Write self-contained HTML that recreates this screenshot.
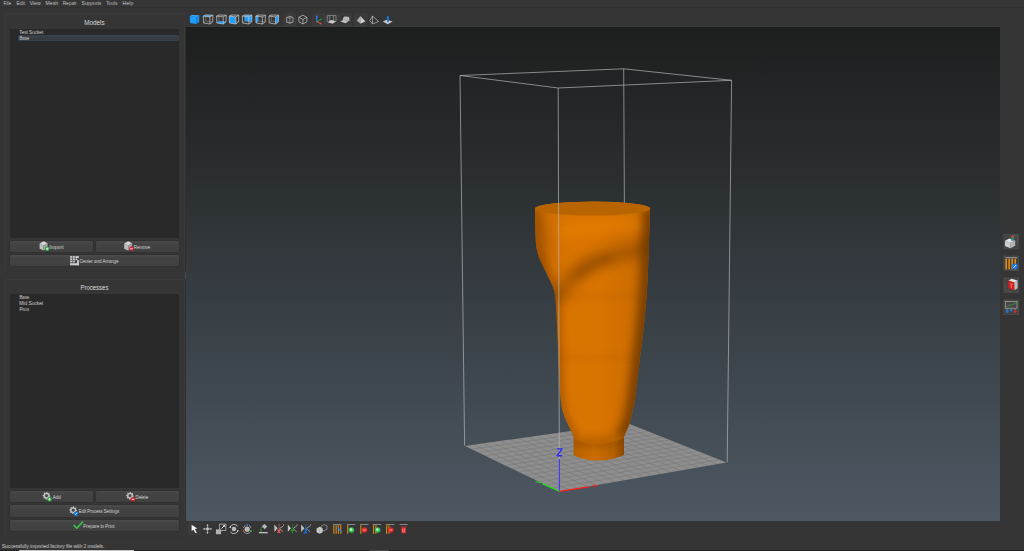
<!DOCTYPE html>
<html><head><meta charset="utf-8">
<style>
*{margin:0;padding:0;box-sizing:border-box}
html,body{width:1024px;height:551px;overflow:hidden;background:#353535;font-family:"Liberation Sans",sans-serif;position:relative}
.a{position:absolute}
.panel{position:absolute;left:5px;width:180px;border-top:1px solid #3a3a3a;border-left:1px solid #393939;border-right:1px solid #393939;border-bottom:1px solid #333}
.list{position:absolute;left:10px;width:169px;background:#292929}
.btn{position:absolute;border-radius:1.5px;background:linear-gradient(#4a4a4a,#434343 30%,#404040);box-shadow:0 0 0 0.5px #2e2e2e}
.vp{position:absolute;left:186px;top:27px;width:814px;height:494px;background:linear-gradient(#1d1e1e 0%,#2a2e30 30%,#3a4248 62%,#4d5863 100%)}
svg{position:absolute;left:0;top:0}
text{font-family:"Liberation Sans",sans-serif}
</style></head><body>
<div class="a" style="left:0;top:7px;width:1024px;height:1px;background:#303030"></div>
<div class="panel" style="top:13px;height:259px"></div>
<div class="list" style="top:29px;height:209px"></div>
<div class="a" style="left:18px;top:35px;width:161px;height:6px;border:0.6px solid #36404b;border-radius:1px;background:linear-gradient(#3c4046,#343a42)"></div>
<div class="btn" style="left:10px;top:241px;width:83px;height:11px"></div>
<div class="btn" style="left:96px;top:241px;width:83px;height:11px"></div>
<div class="btn" style="left:10px;top:255px;width:169px;height:11px"></div>
<div class="panel" style="top:279px;height:258px"></div>
<div class="list" style="top:294px;height:194px"></div>
<div class="btn" style="left:10px;top:491px;width:83px;height:11px"></div>
<div class="btn" style="left:96px;top:491px;width:83px;height:11px"></div>
<div class="btn" style="left:10px;top:505px;width:169px;height:12px"></div>
<div class="btn" style="left:10px;top:520px;width:169px;height:11px"></div>
<div class="a" style="left:185px;top:27px;width:1px;height:494px;background:#303030"></div>
<div class="a" style="left:185px;top:272px;width:2px;height:7px;background:#4a4a4a"></div>
<div class="a" style="left:186px;top:26px;width:814px;height:1px;background:#393939"></div>
<div class="vp"></div>
<div class="a" style="left:0;top:550px;width:1024px;height:1px;background:#222"></div>
<div class="a" style="left:19px;top:550px;width:115px;height:1px;background:#c4c4c4"></div>
<div class="a" style="left:370px;top:550px;width:19px;height:1px;background:#474747"></div>
<svg width="1024" height="551" viewBox="0 0 1024 551">
<svg x="186" y="27" width="814" height="494" viewBox="186 27 814 494">
<defs>
  <linearGradient id="bodyG" x1="535" y1="0" x2="651" y2="0" gradientUnits="userSpaceOnUse">
    <stop offset="0" stop-color="#c86a00"/>
    <stop offset="0.3" stop-color="#d87400"/>
    <stop offset="0.55" stop-color="#d87400"/>
    <stop offset="1" stop-color="#c86a00"/>
  </linearGradient>
  <linearGradient id="cylG" x1="573" y1="0" x2="624" y2="0" gradientUnits="userSpaceOnUse">
    <stop offset="0" stop-color="#b46000"/>
    <stop offset="0.4" stop-color="#cc6c00"/>
    <stop offset="0.8" stop-color="#b46000"/>
    <stop offset="1" stop-color="#8a4800"/>
  </linearGradient>
  <filter id="blur3" filterUnits="userSpaceOnUse" x="400" y="150" width="400" height="350"><feGaussianBlur stdDeviation="3"/></filter>
  <filter id="blur4" filterUnits="userSpaceOnUse" x="400" y="150" width="400" height="350"><feGaussianBlur stdDeviation="4"/></filter>
  <filter id="blur6" filterUnits="userSpaceOnUse" x="400" y="150" width="400" height="350"><feGaussianBlur stdDeviation="6"/></filter>
  <filter id="blur5" filterUnits="userSpaceOnUse" x="400" y="150" width="400" height="350"><feGaussianBlur stdDeviation="5"/></filter>
  <clipPath id="bodyClip"><path id="bodyPath" d="M535.00 208.00 C535.02 210.33 535.02 217.33 535.10 222.00 C535.18 226.67 535.32 232.00 535.50 236.00 C535.68 240.00 535.70 242.67 536.20 246.00 C536.70 249.33 537.37 252.67 538.50 256.00 C539.63 259.33 541.20 262.17 543.00 266.00 C544.80 269.83 547.40 274.75 549.30 279.00 C551.20 283.25 553.23 286.50 554.40 291.50 C555.57 296.50 555.77 301.25 556.30 309.00 C556.83 316.75 557.15 327.83 557.60 338.00 C558.05 348.17 558.55 360.33 559.00 370.00 C559.45 379.67 559.67 389.03 560.30 396.00 C560.93 402.97 561.60 407.20 562.80 411.80 C564.00 416.40 566.08 420.32 567.50 423.60 C568.92 426.88 570.38 429.53 571.30 431.50 C572.22 433.47 572.55 434.22 573.00 435.40 C573.45 436.58 573.83 438.07 574.00 438.60 C582 442.5 590 443.8 597 443.6 C607 443.4 617 441 623.7 437.7 C624.02 436.92 624.62 435.35 625.60 433.00 C626.58 430.65 628.45 427.13 629.60 423.60 C630.75 420.07 631.62 415.73 632.50 411.80 C633.38 407.87 634.22 404.30 634.90 400.00 C635.58 395.70 636.00 391.00 636.60 386.00 C637.20 381.00 637.52 378.00 638.50 370.00 C639.48 362.00 641.33 348.17 642.50 338.00 C643.67 327.83 644.70 317.83 645.50 309.00 C646.30 300.17 646.82 293.17 647.30 285.00 C647.78 276.83 648.07 268.33 648.40 260.00 C648.73 251.67 649.05 241.67 649.30 235.00 C649.55 228.33 649.78 224.33 649.90 220.00 C650.02 215.67 649.98 210.83 650.00 209.00 A57.5 6.9 0 0 0 535 208 Z"/></clipPath>
</defs>
<polygon points="465.00,446.00 627.00,423.00 726.50,462.50 559.50,491.50" fill="#8e8e8e"/><path d="M471.75 449.25L634.11 425.82M478.50 452.50L641.21 428.64M485.25 455.75L648.32 431.46M492.00 459.00L655.43 434.29M498.75 462.25L662.54 437.11M505.50 465.50L669.64 439.93M512.25 468.75L676.75 442.75M519.00 472.00L683.86 445.57M525.75 475.25L690.96 448.39M532.50 478.50L698.07 451.21M539.25 481.75L705.18 454.04M546.00 485.00L712.29 456.86M552.75 488.25L719.39 459.68M474.00 444.72L568.78 489.89M483.00 443.44L578.06 488.28M492.00 442.17L587.33 486.67M501.00 440.89L596.61 485.06M510.00 439.61L605.89 483.44M519.00 438.33L615.17 481.83M528.00 437.06L624.44 480.22M537.00 435.78L633.72 478.61M546.00 434.50L643.00 477.00M555.00 433.22L652.28 475.39M564.00 431.94L661.56 473.78M573.00 430.67L670.83 472.17M582.00 429.39L680.11 470.56M591.00 428.11L689.39 468.94M600.00 426.83L698.67 467.33M609.00 425.56L707.94 465.72M618.00 424.28L717.22 464.11" stroke="#747474" stroke-width="0.5" fill="none"/><line x1="623.7" y1="68.8" x2="625.5" y2="423" stroke="#b0b0b0" stroke-width="0.7"/><path d="M573.6 434 L624 434 L624 455 Q598.8 466 573.6 455.4 Z" fill="url(#cylG)"/><clipPath id="cylClip"><path d="M573.6 434 L624 434 L624 455 Q598.8 466 573.6 455.4 Z"/></clipPath><path d="M570 441 C585 446 610 447 628 440" stroke="#7a3e00" stroke-width="4" fill="none" opacity="0.5" filter="url(#blur3)" clip-path="url(#cylClip)"/><path d="M535.00 208.00 C535.02 210.33 535.02 217.33 535.10 222.00 C535.18 226.67 535.32 232.00 535.50 236.00 C535.68 240.00 535.70 242.67 536.20 246.00 C536.70 249.33 537.37 252.67 538.50 256.00 C539.63 259.33 541.20 262.17 543.00 266.00 C544.80 269.83 547.40 274.75 549.30 279.00 C551.20 283.25 553.23 286.50 554.40 291.50 C555.57 296.50 555.77 301.25 556.30 309.00 C556.83 316.75 557.15 327.83 557.60 338.00 C558.05 348.17 558.55 360.33 559.00 370.00 C559.45 379.67 559.67 389.03 560.30 396.00 C560.93 402.97 561.60 407.20 562.80 411.80 C564.00 416.40 566.08 420.32 567.50 423.60 C568.92 426.88 570.38 429.53 571.30 431.50 C572.22 433.47 572.55 434.22 573.00 435.40 C573.45 436.58 573.83 438.07 574.00 438.60 C582 442.5 590 443.8 597 443.6 C607 443.4 617 441 623.7 437.7 C624.02 436.92 624.62 435.35 625.60 433.00 C626.58 430.65 628.45 427.13 629.60 423.60 C630.75 420.07 631.62 415.73 632.50 411.80 C633.38 407.87 634.22 404.30 634.90 400.00 C635.58 395.70 636.00 391.00 636.60 386.00 C637.20 381.00 637.52 378.00 638.50 370.00 C639.48 362.00 641.33 348.17 642.50 338.00 C643.67 327.83 644.70 317.83 645.50 309.00 C646.30 300.17 646.82 293.17 647.30 285.00 C647.78 276.83 648.07 268.33 648.40 260.00 C648.73 251.67 649.05 241.67 649.30 235.00 C649.55 228.33 649.78 224.33 649.90 220.00 C650.02 215.67 649.98 210.83 650.00 209.00 A57.5 6.9 0 0 0 535 208 Z" fill="url(#bodyG)"/><g clip-path="url(#bodyClip)"><path d="M623.70 437.70 C624.02 436.92 624.62 435.35 625.60 433.00 C626.58 430.65 628.45 427.13 629.60 423.60 C630.75 420.07 631.62 415.73 632.50 411.80 C633.38 407.87 634.22 404.30 634.90 400.00 C635.58 395.70 636.00 391.00 636.60 386.00 C637.20 381.00 637.52 378.00 638.50 370.00 C639.48 362.00 641.33 348.17 642.50 338.00 C643.67 327.83 644.70 317.83 645.50 309.00 C646.30 300.17 646.82 293.17 647.30 285.00 C647.78 276.83 648.07 268.33 648.40 260.00 C648.73 251.67 649.05 241.67 649.30 235.00 C649.55 228.33 649.78 224.33 649.90 220.00 C650.02 215.67 649.98 210.83 650.00 209.00" stroke="#5a2e00" stroke-width="16" fill="none" opacity="0.7" filter="url(#blur5)"/><path d="M535.00 208.00 C535.02 210.33 535.02 217.33 535.10 222.00 C535.18 226.67 535.32 232.00 535.50 236.00 C535.68 240.00 535.70 242.67 536.20 246.00 C536.70 249.33 537.37 252.67 538.50 256.00 C539.63 259.33 541.20 262.17 543.00 266.00 C544.80 269.83 547.40 274.75 549.30 279.00 C551.20 283.25 553.23 286.50 554.40 291.50 C555.57 296.50 555.77 301.25 556.30 309.00 C556.83 316.75 557.15 327.83 557.60 338.00 C558.05 348.17 558.55 360.33 559.00 370.00 C559.45 379.67 559.67 389.03 560.30 396.00 C560.93 402.97 561.60 407.20 562.80 411.80 C564.00 416.40 566.08 420.32 567.50 423.60 C568.92 426.88 570.38 429.53 571.30 431.50 C572.22 433.47 572.55 434.22 573.00 435.40 C573.45 436.58 573.83 438.07 574.00 438.60" stroke="#8a4600" stroke-width="9" fill="none" opacity="0.45" filter="url(#blur3)"/><path d="M554 302 C560 291 574 272 592 263 C606 256 628 252 664 246" stroke="#6a3400" stroke-width="16" fill="none" opacity="0.38" filter="url(#blur6)"/><path d="M576 276 C584 268 594 263 612 258" stroke="#5a2c00" stroke-width="8" fill="none" opacity="0.25" filter="url(#blur4)"/><path d="M560 232 C575 230 600 226 640 222" stroke="#f08a00" stroke-width="16" fill="none" opacity="0.35" filter="url(#blur5)"/><path d="M550 296 Q600 300 650 294" stroke="#9a5000" stroke-width="2" fill="none" opacity="0.35" filter="url(#blur3)"/><path d="M550 356 Q600 360 650 354" stroke="#9a5000" stroke-width="2" fill="none" opacity="0.3" filter="url(#blur3)"/><ellipse cx="539" cy="250" rx="9" ry="40" fill="#8a4600" opacity="0.38" filter="url(#blur4)"/><path d="M556 436 C578 446 612 447 638 430" stroke="#8a4600" stroke-width="10" fill="none" opacity="0.45" filter="url(#blur4)"/></g><ellipse cx="592.6" cy="208.6" rx="57.6" ry="6.8" fill="#b86400"/><path d="M535.2 208.4 A57.6 6.8 0 0 0 650.2 208.8 Q592 219 535.2 208.4 Z" fill="#a85a00" opacity="0.0"/><g stroke="#b4b4b4" stroke-width="0.7" fill="none"><polyline points="460,75.5 623.7,68.8 731.6,80.3 558.2,88 460,75.5"/><line x1="460" y1="75.5" x2="464.6" y2="445.6"/><line x1="731.6" y1="80.3" x2="727.2" y2="462.2"/><line x1="558.2" y1="88" x2="559.3" y2="459"/></g><line x1="559.4" y1="491.3" x2="559.4" y2="459" stroke="#3a3aff" stroke-width="1.1"/><path d="M557 448.9 H562 L557.2 455.7 H562.2" stroke="#2a2aff" stroke-width="1.4" fill="none" stroke-linejoin="round"/><line x1="559.4" y1="491.3" x2="588.8" y2="486.8" stroke="#ff1c1c" stroke-width="1.2"/><path d="M591 486.2 L598 485.4 M593.8 484.3 L596 487.4" stroke="#ff2020" stroke-width="0.9"/><line x1="559.4" y1="491.3" x2="542.3" y2="483.6" stroke="#22e022" stroke-width="1.2"/><path d="M535.6 481.5 L541 482.8" stroke="#22e022" stroke-width="1"/>
</svg>
<g transform="translate(189.50 14.60) scale(1.000)"><polygon points="0.30,1.50 6.90,2.30 6.90,9.40 0.50,8.30" fill="#1e9fff"/><polygon points="6.90,2.30 9.90,0.60 9.70,7.30 6.90,9.40" fill="#1a90ee"/><polygon points="0.30,1.50 2.60,0.40 9.90,0.60 6.90,2.30" fill="#3aaeff"/></g>
<g transform="translate(203.00 14.60) scale(1.000)"><polyline points="2.60,0.40 2.80,6.50 9.70,7.30" fill="none" stroke="#7a7a7a" stroke-width="0.7"/><line x1="2.80" y1="6.50" x2="0.50" y2="8.30" stroke="#7a7a7a" stroke-width="0.7"/><polygon points="0.30,1.50 2.60,0.40 9.90,0.60 6.90,2.30" fill="#1e9fff"/><polygon points="0.30,1.50 2.60,0.40 9.90,0.60 9.70,7.30 6.90,9.40 0.50,8.30" fill="none" stroke="#c4c4c4" stroke-width="0.75" stroke-linejoin="round"/><polyline points="0.30,1.50 6.90,2.30 9.90,0.60" fill="none" stroke="#c4c4c4" stroke-width="0.75"/><line x1="6.90" y1="2.30" x2="6.90" y2="9.40" stroke="#c4c4c4" stroke-width="0.75"/></g>
<g transform="translate(216.30 14.60) scale(1.000)"><polyline points="2.60,0.40 2.80,6.50 9.70,7.30" fill="none" stroke="#7a7a7a" stroke-width="0.7"/><line x1="2.80" y1="6.50" x2="0.50" y2="8.30" stroke="#7a7a7a" stroke-width="0.7"/><polygon points="0.50,8.30 2.80,6.50 9.70,7.30 6.90,9.40" fill="#1e9fff"/><polygon points="0.30,1.50 2.60,0.40 9.90,0.60 9.70,7.30 6.90,9.40 0.50,8.30" fill="none" stroke="#c4c4c4" stroke-width="0.75" stroke-linejoin="round"/><polyline points="0.30,1.50 6.90,2.30 9.90,0.60" fill="none" stroke="#c4c4c4" stroke-width="0.75"/><line x1="6.90" y1="2.30" x2="6.90" y2="9.40" stroke="#c4c4c4" stroke-width="0.75"/></g>
<g transform="translate(228.90 14.60) scale(1.000)"><polyline points="2.60,0.40 2.80,6.50 9.70,7.30" fill="none" stroke="#7a7a7a" stroke-width="0.7"/><line x1="2.80" y1="6.50" x2="0.50" y2="8.30" stroke="#7a7a7a" stroke-width="0.7"/><polygon points="0.30,1.50 6.90,2.30 6.90,9.40 0.50,8.30" fill="#1e9fff"/><polygon points="0.30,1.50 2.60,0.40 9.90,0.60 9.70,7.30 6.90,9.40 0.50,8.30" fill="none" stroke="#c4c4c4" stroke-width="0.75" stroke-linejoin="round"/><polyline points="0.30,1.50 6.90,2.30 9.90,0.60" fill="none" stroke="#c4c4c4" stroke-width="0.75"/><line x1="6.90" y1="2.30" x2="6.90" y2="9.40" stroke="#c4c4c4" stroke-width="0.75"/></g>
<g transform="translate(242.00 14.60) scale(1.000)"><polyline points="2.60,0.40 2.80,6.50 9.70,7.30" fill="none" stroke="#7a7a7a" stroke-width="0.7"/><line x1="2.80" y1="6.50" x2="0.50" y2="8.30" stroke="#7a7a7a" stroke-width="0.7"/><polygon points="2.60,0.40 9.90,0.60 9.70,7.30 2.80,6.50" fill="#1e9fff"/><polygon points="0.30,1.50 2.60,0.40 9.90,0.60 9.70,7.30 6.90,9.40 0.50,8.30" fill="none" stroke="#c4c4c4" stroke-width="0.75" stroke-linejoin="round"/><polyline points="0.30,1.50 6.90,2.30 9.90,0.60" fill="none" stroke="#c4c4c4" stroke-width="0.75"/><line x1="6.90" y1="2.30" x2="6.90" y2="9.40" stroke="#c4c4c4" stroke-width="0.75"/></g>
<g transform="translate(255.50 14.60) scale(1.000)"><polyline points="2.60,0.40 2.80,6.50 9.70,7.30" fill="none" stroke="#7a7a7a" stroke-width="0.7"/><line x1="2.80" y1="6.50" x2="0.50" y2="8.30" stroke="#7a7a7a" stroke-width="0.7"/><polygon points="0.30,1.50 2.60,0.40 2.80,6.50 0.50,8.30" fill="#1e9fff"/><polygon points="0.30,1.50 2.60,0.40 9.90,0.60 9.70,7.30 6.90,9.40 0.50,8.30" fill="none" stroke="#c4c4c4" stroke-width="0.75" stroke-linejoin="round"/><polyline points="0.30,1.50 6.90,2.30 9.90,0.60" fill="none" stroke="#c4c4c4" stroke-width="0.75"/><line x1="6.90" y1="2.30" x2="6.90" y2="9.40" stroke="#c4c4c4" stroke-width="0.75"/></g>
<g transform="translate(268.70 14.60) scale(1.000)"><polyline points="2.60,0.40 2.80,6.50 9.70,7.30" fill="none" stroke="#7a7a7a" stroke-width="0.7"/><line x1="2.80" y1="6.50" x2="0.50" y2="8.30" stroke="#7a7a7a" stroke-width="0.7"/><polygon points="6.90,2.30 9.90,0.60 9.70,7.30 6.90,9.40" fill="#1e9fff"/><polygon points="0.30,1.50 2.60,0.40 9.90,0.60 9.70,7.30 6.90,9.40 0.50,8.30" fill="none" stroke="#c4c4c4" stroke-width="0.75" stroke-linejoin="round"/><polyline points="0.30,1.50 6.90,2.30 9.90,0.60" fill="none" stroke="#c4c4c4" stroke-width="0.75"/><line x1="6.90" y1="2.30" x2="6.90" y2="9.40" stroke="#c4c4c4" stroke-width="0.75"/></g>
<rect x="284.00" y="14.10" width="11.60" height="11.30" rx="0.8" fill="#383838" stroke="#454545" stroke-width="0.7"/><g fill="none" stroke="#bbb" stroke-width="0.7"><path d="M286.6 17.5 L289.8 16.2 L293 17.5 L293 22 L289.8 23.3 L286.6 22 Z"/><path d="M289.8 16.2 V23.3 M286.6 17.5 Q289.8 18.8 293 17.5 M286.6 22 Q289.8 23.3 293 22" stroke="#999"/></g><g fill="none" stroke="#bdbdbd" stroke-width="0.75" stroke-linejoin="round"><path d="M302.9 15.2 L306.9 17.3 L306.9 21.8 L302.9 23.9 L298.9 21.8 L298.9 17.3 Z"/><path d="M298.9 17.3 L302.9 19.5 L306.9 17.3 M302.9 19.5 V23.9"/></g><rect x="313.00" y="14.10" width="11.50" height="11.30" rx="0.8" fill="#383838" stroke="#454545" stroke-width="0.7"/><g stroke-linecap="round"><line x1="316.8" y1="16.3" x2="316.8" y2="21.8" stroke="#2a7fff" stroke-width="1.1"/><circle cx="316.8" cy="16.4" r="0.9" fill="#2a7fff"/><line x1="316.8" y1="21.8" x2="320.8" y2="19.4" stroke="#1fb81f" stroke-width="0.9"/><circle cx="320.8" cy="19.4" r="0.7" fill="#1fb81f"/><line x1="316.8" y1="21.8" x2="320.5" y2="23.5" stroke="#ff4a4a" stroke-width="0.9"/><circle cx="320.6" cy="23.6" r="0.8" fill="#ff5050"/></g><rect x="326.00" y="14.10" width="11.30" height="11.30" rx="0.8" fill="#383838" stroke="#454545" stroke-width="0.7"/><g fill="none" stroke="#a8a8a8" stroke-width="0.6"><path d="M327.3 22 V15.6 H336 V21 M329.7 15.6 V21 M333.5 15.6 V21"/></g><polygon points="327.5,22.2 331.2,20.1 336.2,21.2 332.5,23.8" fill="#c8c8c8"/><rect x="339.00" y="14.10" width="11.70" height="11.30" rx="0.8" fill="#383838" stroke="#454545" stroke-width="0.7"/><polygon points="340.3,21.6 344.5,19.3 349.6,20.3 345.6,23.3" fill="#c4c4c4"/><path d="M342.8 20.3 Q342.9 16.6 345 16.4 Q348.5 16.2 349.3 17.6 L349.4 20.8 L345.8 21.6 Z" fill="#b0b0b0"/><path d="M343 18.6 Q346 17.2 349.2 18.6" stroke="#d8d8d8" stroke-width="0.5" fill="none"/><rect x="355.00" y="14.10" width="11.60" height="11.30" rx="0.8" fill="#383838" stroke="#454545" stroke-width="0.7"/><polygon points="360.4,16 356.7,20.6 360.4,23.8" fill="#a8a8a8"/><polygon points="360.4,16 360.4,23.8 365.4,21.4" fill="#cfcfcf"/><g fill="none" stroke="#bdbdbd" stroke-width="0.7" stroke-linejoin="round"><path d="M372.5 16 L369.8 20.6 L372.5 23.8 L378.7 21.6 Z M372.5 16 V23.8"/></g><polygon points="382.8,21.6 386.6,19.8 392.6,21.6 387.6,24.3" fill="#c8c8c8"/><rect x="386.9" y="15.8" width="1.9" height="6.4" rx="0.9" fill="#1a78e0"/><rect x="188.70" y="523.00" width="11.30" height="11.70" rx="0.8" fill="#383838" stroke="#454545" stroke-width="0.7"/><path d="M191.6 524.8 L191.6 531 L193.4 529.7 L195.5 533.2 L196.8 532.5 L194.8 529 L197.3 528.6 Z" fill="#f2f2f2"/><g fill="#cfcfcf"><rect x="205.9" y="527.6" width="3.2" height="2.6" fill="#aaa"/><path d="M207.5 523.9 L208.7 525.6 L206.3 525.6 Z M207.5 533.9 L208.7 532.2 L206.3 532.2 Z M202.9 528.9 L204.6 527.7 L204.6 530.1 Z M212.1 528.9 L210.4 527.7 L210.4 530.1 Z"/><path d="M207.5 525 V532.8 M203.8 528.9 H211.2" stroke="#cfcfcf" stroke-width="0.6"/></g><rect x="219.6" y="524.1" width="6.3" height="6.3" fill="none" stroke="#b8b8b8" stroke-width="0.8"/><rect x="215.9" y="529.4" width="5.2" height="4.8" fill="#b0b0b0"/><path d="M221.4 528.6 L224.6 525.4" stroke="#e6e6e6" stroke-width="1"/><path d="M225 525 L222.8 525.3 L224.7 527.2 Z" fill="#e6e6e6"/><circle cx="234" cy="529" r="2.3" fill="#b8b8b8"/><path d="M230 527.4 A4.3 4.3 0 0 1 237.6 526.2 M238 530.6 A4.3 4.3 0 0 1 230.4 531.8" fill="none" stroke="#c8c8c8" stroke-width="0.9"/><circle cx="230.2" cy="527.2" r="0.7" fill="#fff"/><circle cx="237.8" cy="530.9" r="0.7" fill="#fff"/><circle cx="247.2" cy="529.2" r="2.6" fill="#b8b8b8"/><path d="M243.5 528 A4 4 0 0 1 245.6 525.3 M248.8 525.3 A4 4 0 0 1 251 528 M250.6 531.6 A4 4 0 0 1 243.8 531.6" fill="none" stroke="#bbb" stroke-width="0.7"/><circle cx="247.2" cy="524.8" r="0.9" fill="#2a7fff"/><circle cx="243.5" cy="531" r="0.8" fill="#e05050"/><circle cx="251" cy="531" r="0.9" fill="#2fb82f"/><rect x="259" y="532" width="8.8" height="1.3" fill="#c0c0c0"/><polygon points="261.8,526.3 264.4,524 267.3,526.6 264.7,529.2" fill="#b8b8b8"/><path d="M261 531.8 V528.8 M261 528.2 L262.4 526.8" stroke="#2fb82f" stroke-width="0.9"/><g transform="translate(274.00 523.3)"><polygon points="0.4,1.3 0.4,8.6 3.6,4.9" fill="#c2c2c2"/><path d="M9.4 2.6 L5.6 5.2 L9.4 8.6" stroke="#b0b0b0" stroke-width="0.8" fill="none"/><path d="M9.6 0.8 V2.4" stroke="#bbb" stroke-width="0.6"/><line x1="5" y1="0.4" x2="5" y2="6.4" stroke="#e05a5a" stroke-width="0.6"/><path d="M3.6 6.2 L6.4 9.8 M6.4 6.2 L3.6 9.8" stroke="#e05a5a" stroke-width="1.3" fill="none"/></g><g transform="translate(287.40 523.3)"><polygon points="0.4,1.3 0.4,8.6 3.6,4.9" fill="#c2c2c2"/><path d="M9.4 2.6 L5.6 5.2 L9.4 8.6" stroke="#b0b0b0" stroke-width="0.8" fill="none"/><path d="M9.6 0.8 V2.4" stroke="#bbb" stroke-width="0.6"/><line x1="5" y1="0.4" x2="5" y2="6.4" stroke="#1a9a1a" stroke-width="0.6"/><path d="M3.6 6.2 L5 8 L6.4 6.2 M5 8 V10" stroke="#1a9a1a" stroke-width="1.3" fill="none"/></g><g transform="translate(300.80 523.3)"><polygon points="0.4,1.3 0.4,8.6 3.6,4.9" fill="#c2c2c2"/><path d="M9.4 2.6 L5.6 5.2 L9.4 8.6" stroke="#b0b0b0" stroke-width="0.8" fill="none"/><path d="M9.6 0.8 V2.4" stroke="#bbb" stroke-width="0.6"/><line x1="5" y1="0.4" x2="5" y2="6.4" stroke="#1f6ed0" stroke-width="0.6"/><path d="M3.7 6.3 H6.3 L3.7 9.6 H6.3" stroke="#1f6ed0" stroke-width="1.3" fill="none"/></g><g><polygon points="321.2,526.2 324,524.6 327,525.8 327,529.2 324.2,530.8 321.2,529.6" fill="none" stroke="#bbb" stroke-width="0.6"/><polygon points="316.6,528.4 319.6,526.8 322.6,528.2 322.6,532.3 319.6,533.8 316.6,532.3" fill="#cfcfcf"/><path d="M316.6 528.4 L319.6 529.8 L322.6 528.2 M319.6 529.8 V533.8" stroke="#9a9a9a" stroke-width="0.5" fill="none"/></g><rect x="333.00" y="524.2" width="8.50" height="0.6" fill="#bbb"/><rect x="333.30" y="525.2" width="1.1" height="8.6" fill="#e08a10"/><rect x="335.60" y="525.2" width="1.1" height="8.6" fill="#e08a10"/><rect x="337.90" y="525.2" width="1.1" height="8.6" fill="#e08a10"/><rect x="340.20" y="525.2" width="1.1" height="8.6" fill="#e08a10"/><path d="M337.6 527.5 L341.8 532.2" stroke="#2a80e8" stroke-width="1.2"/><rect x="346.90" y="524.2" width="8.50" height="0.6" fill="#bbb"/><rect x="347.20" y="525.2" width="1.1" height="8.6" fill="#e08a10"/><circle cx="351.4" cy="530" r="2.8" fill="#2fbf4f"/><circle cx="351.1" cy="529.6" r="1.3" fill="#c8f5d0"/><rect x="360.00" y="524.2" width="8.50" height="0.6" fill="#bbb"/><rect x="360.30" y="525.2" width="1.1" height="8.6" fill="#e08a10"/><circle cx="364.5" cy="530" r="2.8" fill="#e02a2a"/><rect x="363.1" y="529.6" width="2.8" height="0.8" fill="#f6c0c0"/><rect x="372.70" y="524.2" width="8.50" height="0.6" fill="#bbb"/><rect x="373.00" y="525.2" width="1.1" height="8.6" fill="#e08a10"/><rect x="375.30" y="525.2" width="1.1" height="8.6" fill="#e08a10"/><circle cx="377.7" cy="530" r="2.8" fill="#2fbf4f"/><circle cx="377.4" cy="529.6" r="1.3" fill="#c8f5d0"/><rect x="385.80" y="524.2" width="8.50" height="0.6" fill="#bbb"/><rect x="386.10" y="525.2" width="1.1" height="8.6" fill="#e08a10"/><rect x="388.40" y="525.2" width="1.1" height="8.6" fill="#e08a10"/><circle cx="390.8" cy="530" r="2.8" fill="#e02a2a"/><rect x="389.4" y="529.6" width="2.8" height="0.8" fill="#f6c0c0"/><rect x="399.6" y="524.2" width="8" height="0.6" fill="#bbb"/><rect x="400.8" y="526.6" width="5.6" height="1" fill="#e03030"/><rect x="401.3" y="527.8" width="4.6" height="5.4" fill="#e03030"/><path d="M402.8 528.6 V532.4 M404.4 528.6 V532.4" stroke="#f4b0b0" stroke-width="0.6"/><rect x="1003.9" y="234.20" width="14.8" height="14.6" fill="#434343" stroke="#4f4f4f" stroke-width="0.7"/><rect x="1003.9" y="256.00" width="14.8" height="14.6" fill="#434343" stroke="#4f4f4f" stroke-width="0.7"/><rect x="1003.9" y="278.00" width="14.8" height="14.6" fill="#434343" stroke="#4f4f4f" stroke-width="0.7"/><rect x="1003.9" y="300.00" width="14.8" height="14.6" fill="#434343" stroke="#4f4f4f" stroke-width="0.7"/><polygon points="1005,240.8 1009.3,238.6 1015.2,240.6 1010.6,243" fill="#e6e6e6"/><polygon points="1005,240.8 1010.6,243 1010.6,248.2 1005,246.2" fill="#cdcdcd"/><polygon points="1010.6,243 1015.2,240.6 1015.2,245.8 1010.6,248.2" fill="#b4b4b4"/><path d="M1012 235.5 H1017.5 V244" stroke="#6a6a6a" stroke-width="0.4" fill="none"/><rect x="1011.2" y="235.8" width="3" height="1.5" fill="#e04848"/><rect x="1011.2" y="237.5" width="3" height="1.5" fill="#2a9a3a"/><rect x="1011.2" y="239.2" width="3" height="1.5" fill="#2a6ad0"/><rect x="1005.5" y="257.3" width="11.5" height="0.9" fill="#aaa"/><rect x="1005.40" y="258.8" width="1.6" height="10.5" fill="#e08a10"/><rect x="1008.40" y="258.8" width="1.6" height="10.5" fill="#e08a10"/><rect x="1011.40" y="258.8" width="1.6" height="10.5" fill="#e08a10"/><rect x="1014.40" y="258.8" width="1.6" height="10.5" fill="#e08a10"/><circle cx="1014.8" cy="266.4" r="3" fill="#1a78e0"/><path d="M1013.4 267.8 L1016.2 265" stroke="#fff" stroke-width="0.9"/><polygon points="1008.5,280.6 1011.6,278.7 1017.6,280.6 1014.2,282.5" fill="#e4e4e4"/><polygon points="1014.2,282.5 1017.6,280.6 1017.6,288.2 1014.3,290.3" fill="#bdbdbd"/><polygon points="1008.5,280.6 1014.2,282.5 1014.3,290.3 1008.5,288.2" fill="#dd1c1c"/><path d="M1010 283.6 L1012.8 284.5 M1011.4 284 V288.3" stroke="#f09a9a" stroke-width="0.6"/><path d="M1005.6 283 V290 L1012 292" stroke="#666" stroke-width="0.4" fill="none"/><rect x="1005.6" y="301.6" width="11.4" height="6.6" fill="none" stroke="#bbb" stroke-width="0.6"/><path d="M1006.5 306.8 L1009.5 305.6 L1012 304.8 L1015.8 302.8" stroke="#2faa2f" stroke-width="0.7" fill="none"/><path d="M1008 301.8 V308 M1010.6 301.8 V308 M1013.2 301.8 V308 M1005.8 304.6 H1016.8" stroke="#666" stroke-width="0.3"/><rect x="1006" y="310.2" width="2.6" height="2.6" fill="#1a78e0"/><rect x="1009.8" y="309.6" width="2.8" height="1.6" fill="#1a78e0"/><circle cx="1015.2" cy="311.6" r="1.3" fill="#e02a2a"/><path d="M1007.3 308.8 V310 M1011.2 308.8 V309.6 M1015.2 308.8 V310" stroke="#bbb" stroke-width="0.5"/><g transform="translate(39.60 241.30)"><polygon points="0,2.2 4,0 8,2 4,4.2" fill="#d6d6d6"/><polygon points="0,2.2 4,4.2 4,9.3 0,7.4" fill="#bdbdbd"/><polygon points="4,4.2 8,2 8,7.2 4,9.3" fill="#a0a0a0"/></g><circle cx="47.2" cy="248.8" r="2.3" fill="#2fae3f"/><path d="M46 248.8 H48.4 M47.2 247.6 V250" stroke="#fff" stroke-width="0.7"/><g transform="translate(124.20 241.30)"><polygon points="0,2.2 4,0 8,2 4,4.2" fill="#d6d6d6"/><polygon points="0,2.2 4,4.2 4,9.3 0,7.4" fill="#bdbdbd"/><polygon points="4,4.2 8,2 8,7.2 4,9.3" fill="#a0a0a0"/></g><circle cx="131.5" cy="248.8" r="2.3" fill="#d82020"/><path d="M130.2 248.8 H132.8" stroke="#fff" stroke-width="0.8"/><g fill="#cdcdcd"><rect x="70.1" y="256.1" width="2.1" height="1.7"/><rect x="70.1" y="258.4" width="2.1" height="1.7"/><rect x="70.1" y="260.7" width="2.1" height="1.7"/><rect x="72.7" y="256.1" width="2.2" height="1.7"/><rect x="72.7" y="258.4" width="2.2" height="1.7"/><rect x="72.7" y="260.7" width="2.2" height="1.7"/><rect x="75.5" y="256.1" width="3.3" height="1.9"/><rect x="75.5" y="258.4" width="1.8" height="1.8"/><rect x="77" y="260.2" width="1.9" height="5.1"/><rect x="70.1" y="263.2" width="8.8" height="2.1"/></g><polygon points="50.40,495.80 50.33,496.56 49.31,496.96 49.03,497.49 49.26,498.56 48.67,499.04 47.66,498.61 47.09,498.78 46.50,499.70 45.74,499.63 45.34,498.61 44.81,498.33 43.74,498.56 43.26,497.97 43.69,496.96 43.52,496.39 42.60,495.80 42.67,495.04 43.69,494.64 43.97,494.11 43.74,493.04 44.33,492.56 45.34,492.99 45.91,492.82 46.50,491.90 47.26,491.97 47.66,492.99 48.19,493.27 49.26,493.04 49.74,493.63 49.31,494.64 49.48,495.21" fill="#bdbdbd"/><circle cx="46.50" cy="495.80" r="1.48" fill="#444"/><circle cx="49.5" cy="499.3" r="2.3" fill="#2fae3f"/><path d="M48.3 499.3 H50.7 M49.5 498.1 V500.5" stroke="#fff" stroke-width="0.7"/><polygon points="133.90,495.80 133.83,496.56 132.81,496.96 132.53,497.49 132.76,498.56 132.17,499.04 131.16,498.61 130.59,498.78 130.00,499.70 129.24,499.63 128.84,498.61 128.31,498.33 127.24,498.56 126.76,497.97 127.19,496.96 127.02,496.39 126.10,495.80 126.17,495.04 127.19,494.64 127.47,494.11 127.24,493.04 127.83,492.56 128.84,492.99 129.41,492.82 130.00,491.90 130.76,491.97 131.16,492.99 131.69,493.27 132.76,493.04 133.24,493.63 132.81,494.64 132.98,495.21" fill="#bdbdbd"/><circle cx="130.00" cy="495.80" r="1.48" fill="#444"/><circle cx="133" cy="499.3" r="2.3" fill="#d82020"/><path d="M131.7 499.3 H134.3" stroke="#fff" stroke-width="0.8"/><polygon points="77.10,510.20 77.03,510.96 76.01,511.36 75.73,511.89 75.96,512.96 75.37,513.44 74.36,513.01 73.79,513.18 73.20,514.10 72.44,514.03 72.04,513.01 71.51,512.73 70.44,512.96 69.96,512.37 70.39,511.36 70.22,510.79 69.30,510.20 69.37,509.44 70.39,509.04 70.67,508.51 70.44,507.44 71.03,506.96 72.04,507.39 72.61,507.22 73.20,506.30 73.96,506.37 74.36,507.39 74.89,507.67 75.96,507.44 76.44,508.03 76.01,509.04 76.18,509.61" fill="#bdbdbd"/><circle cx="73.20" cy="510.20" r="1.48" fill="#444"/><circle cx="76.1" cy="513.8" r="2.3" fill="#1a78e0"/><path d="M75 514.9 L77.2 512.7" stroke="#fff" stroke-width="0.7"/><path d="M74.2 525.4 L76.9 528.2 L82.5 522.1" fill="none" stroke="#3cc04a" stroke-width="1.6" stroke-linecap="round" stroke-linejoin="round"/>
<text x="3.50" y="5.40" font-size="5.03" textLength="7.70" lengthAdjust="spacingAndGlyphs" fill="#dcdcdc" stroke="#353535" stroke-width="0.10">File</text>
<text x="16.40" y="5.40" font-size="5.03" textLength="8.50" lengthAdjust="spacingAndGlyphs" fill="#dcdcdc" stroke="#353535" stroke-width="0.10">Edit</text>
<text x="29.70" y="5.40" font-size="5.03" textLength="10.90" lengthAdjust="spacingAndGlyphs" fill="#dcdcdc" stroke="#353535" stroke-width="0.10">View</text>
<text x="45.50" y="5.40" font-size="5.03" textLength="12.60" lengthAdjust="spacingAndGlyphs" fill="#dcdcdc" stroke="#353535" stroke-width="0.10">Mesh</text>
<text x="62.70" y="5.40" font-size="5.03" textLength="14.00" lengthAdjust="spacingAndGlyphs" fill="#dcdcdc" stroke="#353535" stroke-width="0.10">Repair</text>
<text x="81.60" y="5.40" font-size="5.03" textLength="19.70" lengthAdjust="spacingAndGlyphs" fill="#dcdcdc" stroke="#353535" stroke-width="0.10">Supports</text>
<text x="106.20" y="5.40" font-size="5.03" textLength="11.10" lengthAdjust="spacingAndGlyphs" fill="#dcdcdc" stroke="#353535" stroke-width="0.10">Tools</text>
<text x="122.60" y="5.40" font-size="5.03" textLength="10.70" lengthAdjust="spacingAndGlyphs" fill="#dcdcdc" stroke="#353535" stroke-width="0.10">Help</text>
<text x="84.30" y="25.10" font-size="6.93" textLength="20.40" lengthAdjust="spacingAndGlyphs" fill="#e6e6e6" stroke="#353535" stroke-width="0.10">Models</text>
<text x="80.50" y="290.40" font-size="6.93" textLength="27.90" lengthAdjust="spacingAndGlyphs" fill="#e6e6e6" stroke="#353535" stroke-width="0.10">Processes</text>
<text x="19.30" y="34.10" font-size="5.22" textLength="23.90" lengthAdjust="spacingAndGlyphs" fill="#e8e8e8" stroke="#292929" stroke-width="0.10">Test Socket</text>
<text x="19.40" y="40.00" font-size="5.22" textLength="9.80" lengthAdjust="spacingAndGlyphs" fill="#e8e8e8" stroke="#343b45" stroke-width="0.10">Base</text>
<text x="19.40" y="299.10" font-size="5.22" textLength="9.80" lengthAdjust="spacingAndGlyphs" fill="#e8e8e8" stroke="#292929" stroke-width="0.10">Base</text>
<text x="19.30" y="305.00" font-size="5.22" textLength="23.90" lengthAdjust="spacingAndGlyphs" fill="#e8e8e8" stroke="#292929" stroke-width="0.10">Mid Socket</text>
<text x="19.40" y="310.90" font-size="5.22" textLength="9.60" lengthAdjust="spacingAndGlyphs" fill="#e8e8e8" stroke="#292929" stroke-width="0.10">Prox</text>
<text x="49.60" y="249.20" font-size="5.13" textLength="13.90" lengthAdjust="spacingAndGlyphs" fill="#e8e8e8" stroke="#444444" stroke-width="0.10">Import</text>
<text x="133.70" y="249.20" font-size="5.13" textLength="16.50" lengthAdjust="spacingAndGlyphs" fill="#e8e8e8" stroke="#444444" stroke-width="0.10">Remove</text>
<text x="79.40" y="262.90" font-size="5.13" textLength="39.00" lengthAdjust="spacingAndGlyphs" fill="#e8e8e8" stroke="#444444" stroke-width="0.10">Center and Arrange</text>
<text x="52.80" y="498.90" font-size="5.13" textLength="7.90" lengthAdjust="spacingAndGlyphs" fill="#e8e8e8" stroke="#444444" stroke-width="0.10">Add</text>
<text x="135.50" y="498.90" font-size="5.13" textLength="12.70" lengthAdjust="spacingAndGlyphs" fill="#e8e8e8" stroke="#444444" stroke-width="0.10">Delete</text>
<text x="78.80" y="513.20" font-size="5.13" textLength="40.30" lengthAdjust="spacingAndGlyphs" fill="#e8e8e8" stroke="#444444" stroke-width="0.10">Edit Process Settings</text>
<text x="83.20" y="527.70" font-size="5.13" textLength="31.40" lengthAdjust="spacingAndGlyphs" fill="#e8e8e8" stroke="#444444" stroke-width="0.10">Prepare to Print</text>
<text x="2.10" y="547.80" font-size="5.13" textLength="102.20" lengthAdjust="spacingAndGlyphs" fill="#e8e8e8" stroke="#353535" stroke-width="0.10">Successfully imported factory file with 2 models.</text>

</svg>
</body></html>
